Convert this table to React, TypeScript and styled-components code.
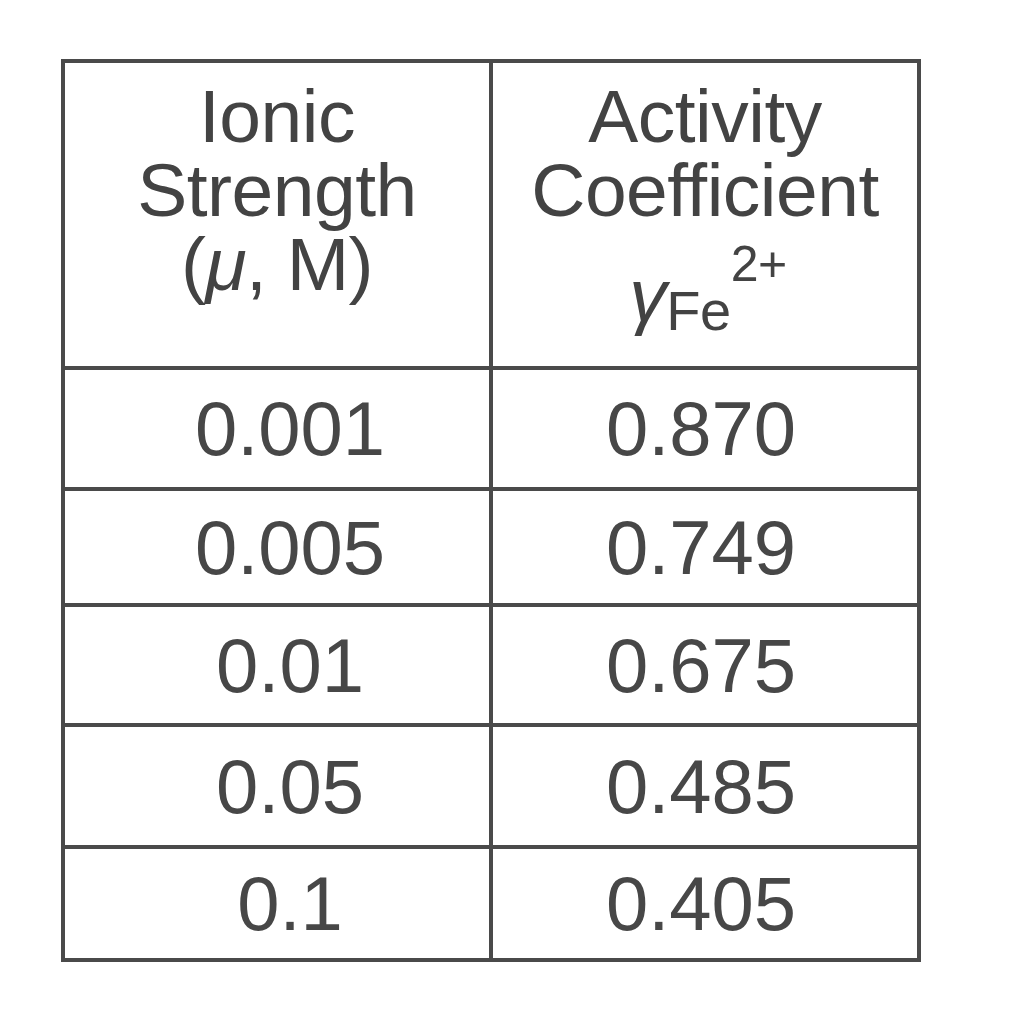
import { createGlobalStyle } from 'styled-components'
import styled from 'styled-components'

const GlobalStyle = createGlobalStyle`
  html, body {
    margin: 0;
    padding: 0;
    background: #ffffff;
  }
  body {
    font-family: 'Liberation Sans', Arial, sans-serif;
  }
`

const Page = styled.div`
  padding: 59px 0 0 61px;
`

const Table = styled.div`
  display: grid;
  grid-template-columns: 424px 424px;
  grid-template-rows: 303px 117px 112px 116px 118px 109px;
  gap: 4px;
  padding: 4px;
  width: max-content;
  background: #4a4a4a;
`

const HeadCell = styled.div`
  background: #ffffff;
  padding-top: 16px;
  text-align: center;
  font-size: 75px;
  line-height: 74px;
  color: #434343;
  letter-spacing: -0.5px;
`

const Line = styled.div`
  display: block;
`

const Italic = styled.span`
  font-style: italic;
`

const GammaLine = styled.div`
  display: block;
  margin-top: 0;
  padding-left: 6px;
  line-height: 74px;
  white-space: nowrap;
`

const Sub = styled.span`
  font-size: 56px;
  vertical-align: -9px;
`

const Sup = styled.span`
  font-size: 50px;
  vertical-align: 40px;
`

const Cell = styled.div<{ $left: boolean }>`
  background: #ffffff;
  display: flex;
  align-items: center;
  justify-content: center;
  padding: ${(p) => (p.$left ? '0 0 0 26px' : '0 8px 0 0')};
  font-size: 76px;
  color: #474747;
`

const rows = [
  ['0.001', '0.870'],
  ['0.005', '0.749'],
  ['0.01', '0.675'],
  ['0.05', '0.485'],
  ['0.1', '0.405'],
]

const App = () => {
  return (
    <Page>
      <GlobalStyle />
      <Table>
        <HeadCell>
          <Line>Ionic</Line>
          <Line>Strength</Line>
          <Line>
            (<Italic>μ</Italic>, M)
          </Line>
        </HeadCell>
        <HeadCell>
          <Line>Activity</Line>
          <Line>Coefficient</Line>
          <GammaLine>
            <Italic>γ</Italic>
            <Sub>Fe</Sub>
            <Sup>2+</Sup>
          </GammaLine>
        </HeadCell>
        {rows.map(([mu, gamma]) => [
          <Cell key={mu + 'a'} $left>
            {mu}
          </Cell>,
          <Cell key={mu + 'b'} $left={false}>
            {gamma}
          </Cell>,
        ])}
      </Table>
    </Page>
  )
}

export default App
